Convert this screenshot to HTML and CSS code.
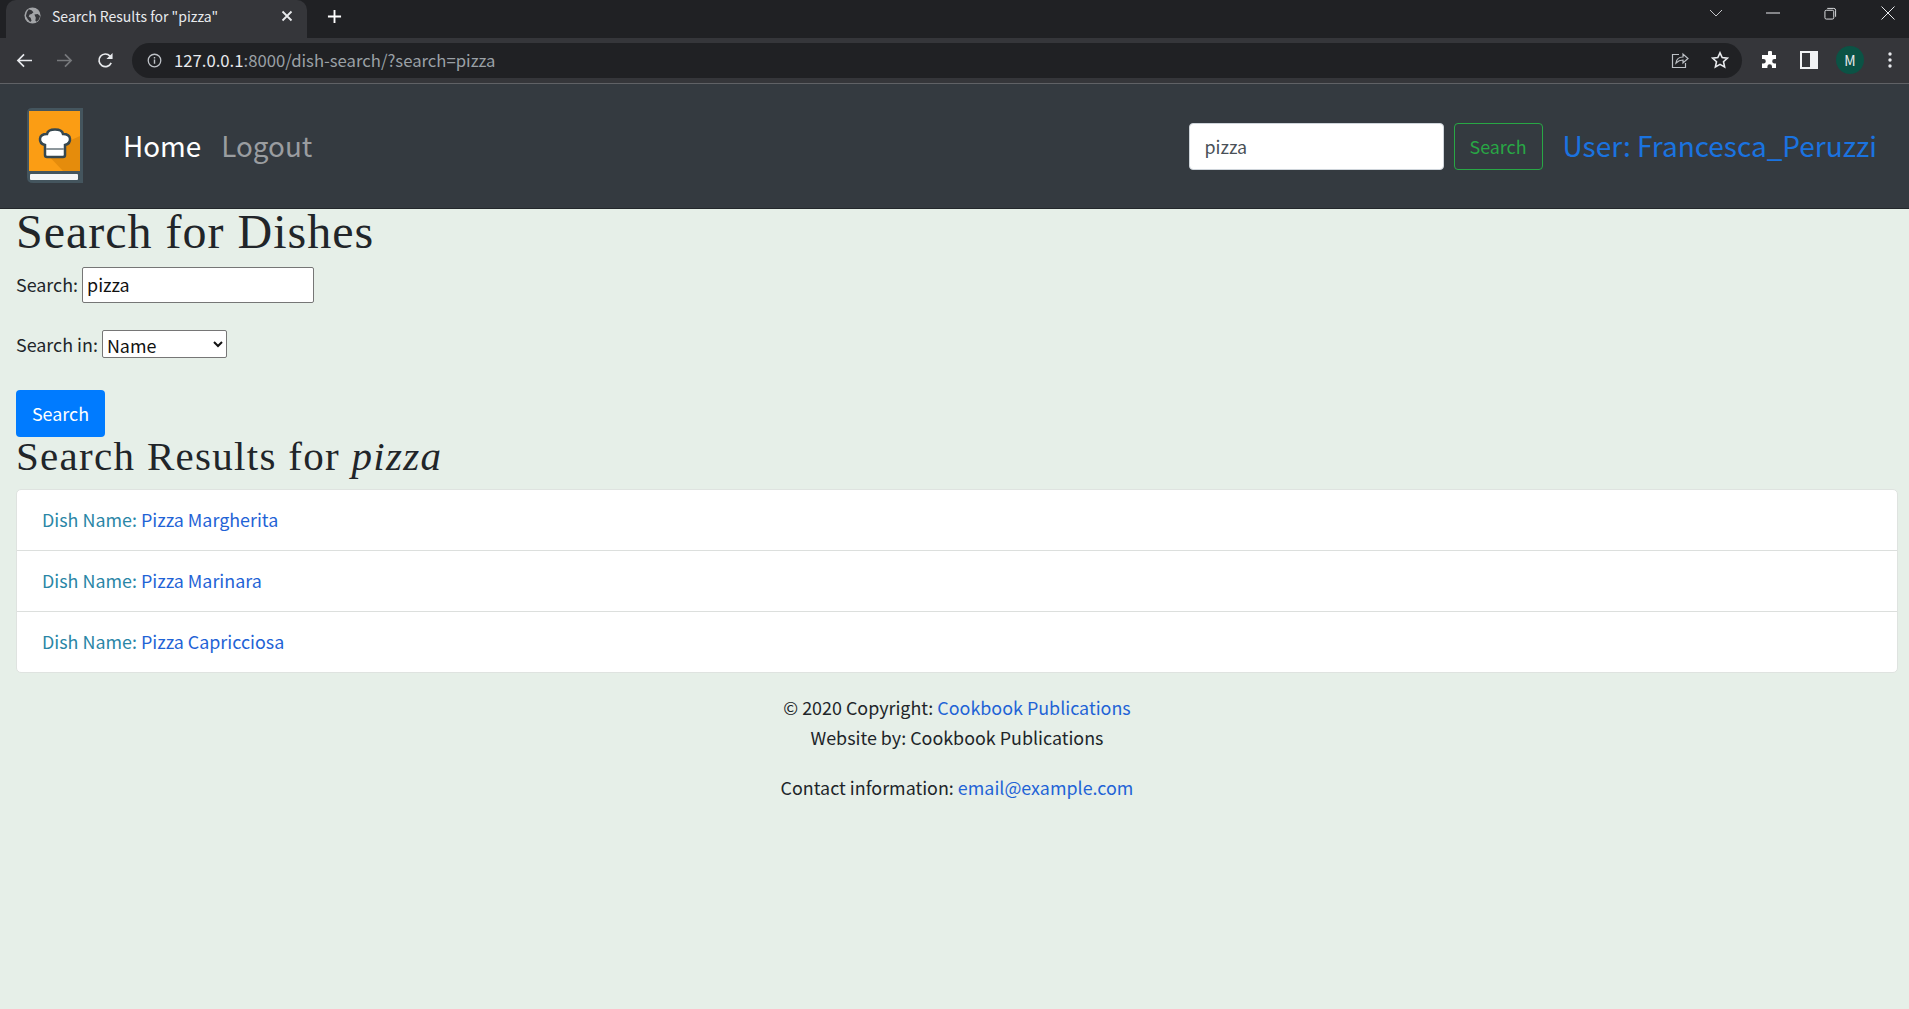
FILE: index.html
```html
<!DOCTYPE html>
<html lang="en">
<head>
<meta charset="utf-8">
<title>Search Results for "pizza"</title>
<link rel="stylesheet" href="styles.css">
</head>
<body>
<div class="tabstrip">
  <div class="tab">
    <svg class="favicon" viewBox="0 0 18 18"><circle cx="9" cy="9" r="8.5" fill="#a3a5a8"/><path d="M5 2.500l3 1 2 2-2 2-2 .5-1 2 2 1.500 1 3-1.500 1.500-2.500-3-2-3.500 1-4zM11 8l3.500-.5 2.500 2-1 3.500-2.500 2.500-1.500-1 .5-3z" fill="#35363a"/></svg>
    <span class="tab-title">Search Results for "pizza"</span>
    <svg class="tab-close" viewBox="0 0 12 12"><path d="M1.500 1.500l9 9M10.500 1.500l-9 9" stroke="#e8eaed" stroke-width="1.800" fill="none"/></svg>
  </div>
  <svg class="newtab" viewBox="0 0 16 16"><path d="M8 1v14M1 8h14" stroke="#fff" stroke-width="2" fill="none"/></svg>
  <div class="winctl">
    <svg class="wi wi-chev" viewBox="0 0 14 8"><path d="M1 1l6 6 6-6" stroke="#c4c6c9" fill="none"/></svg>
    <svg class="wi wi-min" viewBox="0 0 14 2"><path d="M0 1h14" stroke="#e8eaed" fill="none"/></svg>
    <svg class="wi wi-max" viewBox="0 0 14 14"><path d="M3.500 1.500h7q2 0 2 2v7" stroke="#e8eaed" fill="none"/><rect x="1" y="3.500" width="9.500" height="9.500" rx="1.500" stroke="#e8eaed" fill="none"/></svg>
    <svg class="wi wi-close" viewBox="0 0 14 14"><path d="M.5.500l13 13M13.500.500l-13 13" stroke="#e8eaed" fill="none"/></svg>
  </div>
</div>
<div class="toolbar">
  <svg class="tb tb-back" viewBox="0 0 18 16"><path d="M17 8H2M8.500 1.500L2 8l6.500 6.500" stroke="#e8eaed" stroke-width="1.800" fill="none"/></svg>
  <svg class="tb tb-fwd" viewBox="0 0 18 16"><path d="M1 8h15M9.500 1.500L16 8l-6.500 6.500" stroke="#77797c" stroke-width="1.800" fill="none"/></svg>
  <svg class="tb tb-reload" viewBox="0 0 18 18"><path d="M15 11.500A6.700 6.700 0 1 1 13.800 4.300L15.500 6" stroke="#e8eaed" stroke-width="1.800" fill="none"/><path d="M16.500 1v6.500H10z" fill="#e8eaed"/></svg>
  <div class="omnibox">
    <svg class="info" viewBox="0 0 16 16"><circle cx="8" cy="8" r="6.700" stroke="#bdc1c6" stroke-width="1.400" fill="none"/><path d="M8 7v4.500M8 4.200v1.600" stroke="#bdc1c6" stroke-width="1.500" fill="none"/></svg>
    <span class="url"><span class="url-host">127.0.0.1</span>:8000/dish-search/?search=pizza</span>
    <svg class="om om-share" viewBox="0 0 18 18"><path d="M8 3.500H1.500v13h13V12" stroke="#bdc1c6" stroke-width="1.200" fill="none"/><path d="M5 12c.5-4 3.500-6 7-6V3l5 4.500L12 12V9c-3 0-5 1-7 3z" stroke="#bdc1c6" stroke-width="1.200" fill="none"/></svg>
    <svg class="om om-star" viewBox="0 0 18 18"><path d="M9 1.800l2.200 4.800 5.200.6-3.900 3.500 1.100 5.200L9 13.300l-4.600 2.600 1.100-5.200L1.600 7.200l5.200-.6z" stroke="#e8eaed" stroke-width="1.600" fill="none"/></svg>
  </div>
  <svg class="tb tb-puzzle" viewBox="0 0 18 18"><path d="M7 1.500a2 2 0 0 1 4 0V4h4v4h-1.500a2.300 2.300 0 0 0 0 4.600H15V17h-4v-1.500a2.300 2.300 0 0 0-4.600 0V17H1v-4.500h1.500a2.300 2.300 0 0 0 0-4.600H1V4h6z" fill="#fff"/></svg>
  <svg class="tb tb-side" viewBox="0 0 18 18"><path fill-rule="evenodd" d="M0 0h18v18H0zM2 2v14h8V2z" fill="#f1f3f4"/></svg>
  <div class="avatar">M</div>
  <svg class="tb tb-dots" viewBox="0 0 4 16"><circle cx="2" cy="2" r="1.700" fill="#e8eaed"/><circle cx="2" cy="8" r="1.700" fill="#e8eaed"/><circle cx="2" cy="14" r="1.700" fill="#e8eaed"/></svg>
</div>
<nav class="navbar">
  <svg class="logo" viewBox="0 0 56 75">
    <path d="M5 0h51v75H6q-6 0-6-6V5q0-5 5-5z" fill="#44555e"/>
    <rect x="2" y="3" width="51" height="60" fill="#fb9d14"/>
    <path d="M18 44L53 28V63H36z" fill="#e58c0c"/>
    <rect x="3" y="66" width="48" height="6" rx="1" fill="#f4f6f7"/>
    <path d="M18 47V37c-7-2-7-11 2-11 1-6 15-6 16 0 9 0 9 9 2 11v10q0 2-2 2H20q-2 0-2-2z" fill="#fff" stroke="#36474f" stroke-width="2.500"/>
    <path d="M19 41h18" stroke="#8d979c" stroke-width="2"/>
  </svg>
  <a class="nav-link nav-home" href="#">Home</a>
  <a class="nav-link nav-logout" href="#">Logout</a>
  <form class="nav-search">
    <input class="nav-input" type="text" value="pizza">
    <button class="nav-btn" type="button">Search</button>
  </form>
  <a class="nav-user" href="#">User: Francesca_Peruzzi</a>
</nav>
<main class="content">
  <h1 class="title">Search for Dishes</h1>
  <form class="search-form">
    <div class="row row-search">
      <label class="lbl" for="s">Search:</label>
      <input class="field" id="s" type="text" value="pizza">
    </div>
    <div class="row row-in">
      <label class="lbl lbl-in" for="w">Search in:</label>
      <select class="pick" id="w"><option>Name</option></select>
    </div>
    <button class="go" type="button">Search</button>
  </form>
  <h2 class="subtitle">Search Results for <em>pizza</em></h2>
  <ul class="results">
    <li class="result"><a class="result-link" href="#"><span class="teal">Dish Name: </span>Pizza Margherita</a></li>
    <li class="result"><a class="result-link" href="#"><span class="teal">Dish Name: </span>Pizza Marinara</a></li>
    <li class="result"><a class="result-link" href="#"><span class="teal">Dish Name: </span>Pizza Capricciosa</a></li>
  </ul>
  <footer class="foot">
    <div class="foot-line">© 2020 Copyright: <a href="#">Cookbook Publications</a></div>
    <div class="foot-line">Website by: Cookbook Publications</div>
    <div class="foot-line foot-contact">Contact information: <a href="#">email@example.com</a></div>
  </footer>
</main>
</body>
</html>
```
FILE: styles.css
```css
* { box-sizing: border-box; }
html, body { height: 100%; }
body {
  margin: 0;
  overflow: hidden;
  background: #e6efe8;
  color: #212529;
  font-family: "Noto Sans CJK JP", "Noto Sans", sans-serif;
  font-size: 17.900px;
}
a { text-decoration: none; }

.tabstrip {
  height: 38px;
  background: #202124;
  display: flex;
  align-items: center;
  padding-left: 6px;
}
.tab {
  width: 301px;
  height: 38px;
  background: #35363a;
  border-radius: 10px 10px 0 0;
  display: flex;
  align-items: center;
  padding: 0 14px 7px 18px;
}
.favicon { width: 17px; height: 17px; flex: none; }
.tab-title {
  margin-left: 11px;
  color: #e8eaed;
  font-size: 14px;
  white-space: nowrap;
  flex: 1;
}
.tab-close { width: 12px; height: 12px; }
.newtab { width: 15px; height: 15px; margin: -6px 0 0 20px; }
.winctl { margin-left: auto; display: flex; align-items: center; height: 26px; margin-top: -12px; }
.wi { display: block; }
.wi-chev { width: 14px; height: 8px; margin-right: 43px; }
.wi-min { width: 14px; height: 2px; margin-right: 44px; }
.wi-max { width: 13px; height: 13px; margin-right: 44px; }
.wi-close { width: 14px; height: 14px; margin-right: 14px; }

.toolbar {
  height: 46px;
  background: #35363a;
  border-bottom: 1px solid #606266;
  display: flex;
  align-items: center;
  padding-bottom: 1px;
}
.tb { display: block; flex: none; }
.tb-back { width: 17px; height: 15px; margin-left: 16px; }
.tb-fwd { width: 17px; height: 15px; margin-left: 23px; }
.tb-reload { width: 17px; height: 17px; margin-left: 24px; }
.omnibox {
  width: 1610px;
  height: 35px;
  margin-left: 18px;
  border-radius: 18px;
  background: #202124;
  display: flex;
  align-items: center;
  padding: 0 13px 0 15px;
}
.info { width: 15px; height: 15px; flex: none; }
.url { margin-left: 12px; font-size: 16.700px; color: #9aa0a6; white-space: nowrap; flex: 1; margin-top: -1px; }
.url-host { color: #e8eaed; }
.om { display: block; flex: none; }
.om-share { width: 18px; height: 18px; margin-right: 22px; }
.om-star { width: 18px; height: 18px; }
.tb-puzzle { width: 18px; height: 18px; margin-left: 19px; }
.tb-side { width: 18px; height: 18px; margin-left: 21px; }
.avatar {
  width: 28px;
  height: 28px;
  margin-left: 18px;
  border-radius: 50%;
  background: #0b5345;
  color: #e8eaed;
  font-size: 14px;
  display: flex;
  align-items: center;
  justify-content: center;
  flex: none;
}
.tb-dots { width: 4px; height: 16px; margin-left: 24px; }

.navbar {
  height: 125px;
  background: #343a40;
  border-bottom: 1px solid #23272b;
  display: flex;
  align-items: center;
  padding: 0 32px 0 27px;
}
.logo { width: 56px; height: 75px; flex: none; margin-top: -2px; }
.nav-link { font-size: 27.800px; line-height: 40px; margin-top: -2px; }
.nav-home { margin-left: 40px; color: #fff; }
.nav-logout { margin-left: 20px; color: #9a9da0; }
.nav-search { margin-left: auto; display: flex; align-items: center; }
.nav-input {
  width: 255px;
  height: 47px;
  border: 1px solid #ced4da;
  border-radius: 4px;
  background: #fff;
  padding: 0 15px 1px;
  font: inherit;
  color: #495057;
}
.nav-btn {
  width: 89px;
  height: 47px;
  margin-left: 10px;
  border: 1px solid #28a745;
  border-radius: 4px;
  background: transparent;
  color: #28a745;
  font: inherit;
  padding: 0;
}
.nav-user { margin-left: 20px; color: #1a73e0; font-size: 28px; line-height: 40px; white-space: nowrap; margin-top: -2px; }

.content { padding: 0 11px 0 16px; }
.title {
  margin: 0 0 12px;
  font-family: "Liberation Serif", serif;
  font-weight: 400;
  font-size: 48px;
  letter-spacing: 1px;
  line-height: 46px;
}
.search-form { display: block; }
.row { display: flex; align-items: center; }
.row-search { height: 36px; }
.row-in { margin-top: 27px; height: 28px; }
.lbl { margin-right: 4px; margin-top: -2px; }
.lbl-in { margin-top: 0; }
.field {
  width: 232px;
  height: 36px;
  border: 1px solid #767676;
  border-radius: 2px;
  background: #fff;
  padding: 0 4px 2px;
  font: inherit;
  color: #111;
}
.pick {
  width: 125px;
  height: 28px;
  border: 1px solid #767676;
  border-radius: 2px;
  background-color: #fff;
  font: inherit;
  line-height: 20px;
  color: #111;
  padding: 0;
}
.go {
  display: block;
  width: 89px;
  height: 47px;
  margin-top: 32px;
  border: 0;
  border-radius: 4px;
  background: #007bff;
  color: #fff;
  font: inherit;
  padding: 0 0 2px;
}
.subtitle {
  margin: 0 0 14px;
  font-family: "Liberation Serif", serif;
  font-weight: 400;
  font-size: 41px;
  letter-spacing: 1.300px;
  line-height: 38px;
}
.results {
  list-style: none;
  margin: 0;
  padding: 0;
  background: #fff;
  border: 1px solid #dfe3e0;
  border-radius: 5px;
}
.result {
  height: 61px;
  display: flex;
  align-items: center;
  padding: 0 0 2px 25px;
  border-top: 1px solid #dcdfdd;
}
.result:first-child { border-top: 0; height: 60px; }
.result-link { color: #1f63d6; }
.teal { color: #2a86a6; }
.foot { text-align: center; margin-top: 19px; }
.foot-line { line-height: 30px; }
.foot a { color: #1f63d6; }
.foot-contact { margin-top: 20px; }
```
